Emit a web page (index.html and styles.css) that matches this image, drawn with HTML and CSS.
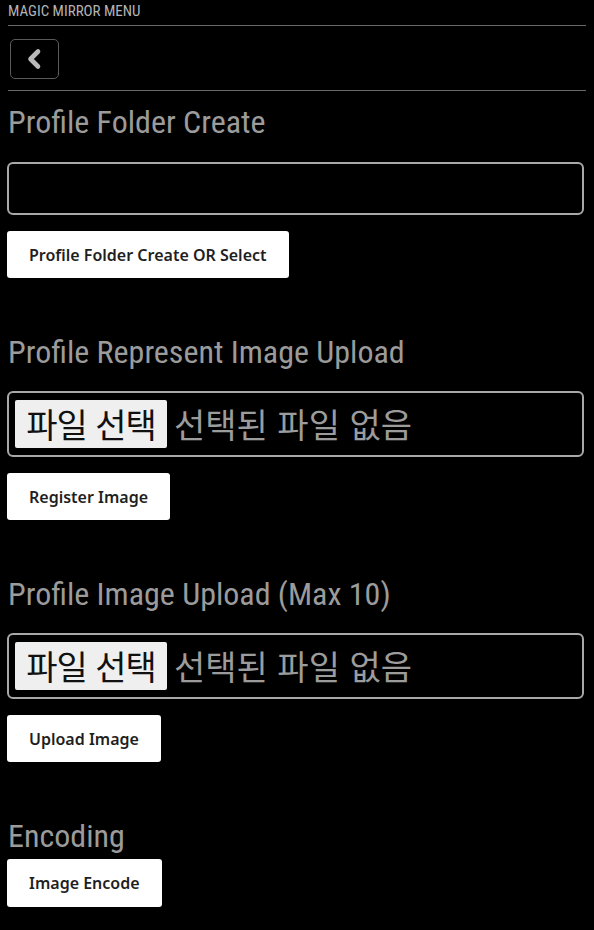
FILE: index.html
```html
<!DOCTYPE html>
<html lang="ko">
<head>
<meta charset="utf-8">
<title>Magic Mirror Menu</title>
<link rel="stylesheet" href="styles.css">
</head>
<body>
<div class="page">
  <header class="topbar">MAGIC MIRROR MENU</header>
  <nav class="navbar">
    <button class="back-btn" type="button" aria-label="back">
      <svg width="20" height="22" viewBox="0 0 20 22"><polyline points="13,3.5 5.5,11 13,18.5" fill="none" stroke="#b9b9b9" stroke-width="4.6" stroke-linecap="round" stroke-linejoin="round"/></svg>
    </button>
  </nav>

  <section class="section">
    <h2 class="title">Profile Folder Create</h2>
    <div class="text-input"></div>
    <button class="action" type="button">Profile Folder Create OR Select</button>
  </section>

  <section class="section">
    <h2 class="title">Profile Represent Image Upload</h2>
    <div class="file-input"><span class="file-btn">파일 선택</span><span class="file-none">선택된 파일 없음</span></div>
    <button class="action" type="button">Register Image</button>
  </section>

  <section class="section">
    <h2 class="title">Profile Image Upload (Max 10)</h2>
    <div class="file-input"><span class="file-btn">파일 선택</span><span class="file-none">선택된 파일 없음</span></div>
    <button class="action" type="button">Upload Image</button>
  </section>

  <section class="section compact">
    <h2 class="title">Encoding</h2>
    <button class="action" type="button">Image Encode</button>
  </section>
</div>
</body>
</html>
```

FILE: styles.css
```css
html, body {
  margin: 0;
  padding: 0;
  background: #000;
}

.page {
  padding: 0 8px;
  display: flex;
  flex-direction: column;
  align-items: flex-start;
}

.topbar {
  align-self: stretch;
  font-family: "Roboto Condensed", "Liberation Sans Narrow", "DejaVu Sans Condensed", Roboto, sans-serif;
  font-size: 15px;
  line-height: 16px;
  color: #b4b4b4;
  box-sizing: border-box;
  border-bottom: 1px solid #6a6a6a;
  height: 26px;
  padding-top: 3px;
}

.navbar {
  align-self: stretch;
  padding: 13px 0 11px 2px;
  border-bottom: 1px solid #6a6a6a;
}

.back-btn {
  width: 49px;
  height: 40px;
  background: #000;
  border: 1px solid #5a5a5a;
  border-radius: 5px;
  display: flex;
  align-items: center;
  justify-content: center;
  padding: 0;
}

.section {
  align-self: stretch;
  display: flex;
  flex-direction: column;
  align-items: flex-start;
  margin-top: 56px;
}

.navbar + .section {
  margin-top: 13px;
}

.title {
  margin: 0;
  font-family: "Roboto Condensed", "Liberation Sans Narrow", "DejaVu Sans Condensed", Roboto, sans-serif;
  font-weight: 400;
  font-size: 32px;
  line-height: 36px;
  color: #9b9b9b;
}

.text-input {
  align-self: stretch;
  margin: 22px 2px 0 -1px;
  height: 53px;
  box-sizing: border-box;
  border: 2px solid #a8a8a8;
  border-radius: 6px;
}

.file-input {
  align-self: stretch;
  margin: 21px 2px 0 -1px;
  height: 66px;
  box-sizing: border-box;
  border: 2px solid #a8a8a8;
  border-radius: 6px;
  display: flex;
  align-items: center;
  padding-left: 6px;
  font-family: "Noto Sans CJK KR", "Noto Sans", sans-serif;
  font-size: 34px;
}

.file-btn {
  width: 152px;
  height: 48px;
  background: #efefef;
  color: #111;
  border-radius: 2px;
  display: flex;
  align-items: center;
  justify-content: center;
  line-height: 1;
  letter-spacing: -1px;
}

.file-none {
  margin-left: 7px;
  color: #9c9c9c;
  line-height: 1;
}

.action {
  margin: 16px 0 0 -1px;
  height: 47px;
  padding: 0 22px;
  background: #fff;
  color: #1f1f1f;
  border: none;
  border-radius: 3px;
  font-family: "Noto Sans", "Open Sans", sans-serif;
  font-weight: 600;
  font-size: 16px;
}

.compact .action {
  margin-top: 5px;
  height: 48px;
}
```
